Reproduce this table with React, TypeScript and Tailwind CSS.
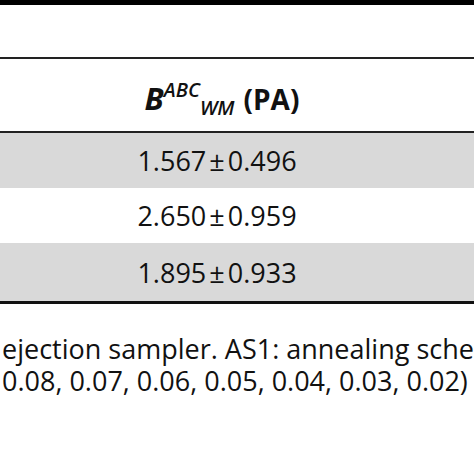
export default function App() {
  const rows = [
    { value: "1.567", sd: "0.496", shade: true, h: "h-[55px]" },
    { value: "2.650", sd: "0.959", shade: false, h: "h-[55px]" },
    { value: "1.895", sd: "0.933", shade: true, h: "h-[58px]" },
  ]

  return (
    <div
      className="w-[474px] h-[474px] overflow-hidden bg-white text-[#111]"
      style={{ fontFamily: "'Open Sans', 'Noto Sans', sans-serif" }}>
      <div className="h-[5px] bg-black" />
      <div className="h-[52px]" />
      <div className="h-[2px] bg-[#222]" />

      <div className="grid grid-cols-[100px_244px_1fr] h-[72px] items-center">
        <div />
        <div className="flex justify-center items-baseline pt-[6px] leading-none">
          <span className="italic font-bold text-[31px]">B</span>
          <span className="italic font-semibold text-[20px] relative top-[-13px]">ABC</span>
          <span className="italic font-semibold text-[20px] relative top-[5px]">WM</span>
          <span className="font-bold text-[28px] ml-[9px]">(PA)</span>
        </div>
        <div />
      </div>
      <div className="h-[2px] bg-[#222]" />

      {rows.map((r) => (
        <div
          key={r.value}
          className={`grid grid-cols-[100px_236px_1fr] items-center ${r.h} ${r.shade ? "bg-[#d9d9d9]" : "bg-white"}`}>
          <div />
          <div className="flex justify-center text-[27px] leading-none pr-[2px]">
            <span>{r.value}</span>
            <span className="mx-[3px]">±</span>
            <span>{r.sd}</span>
          </div>
          <div />
        </div>
      ))}
      <div className="h-[3px] bg-[#111]" />

      <div className="pt-[29px] pl-[2px] text-[27px] leading-[32px] whitespace-nowrap overflow-hidden">
        <p>ejection sampler. AS1: annealing sche</p>
        <p>0.08, 0.07, 0.06, 0.05, 0.04, 0.03, 0.02)</p>
      </div>
    </div>
  )
}
